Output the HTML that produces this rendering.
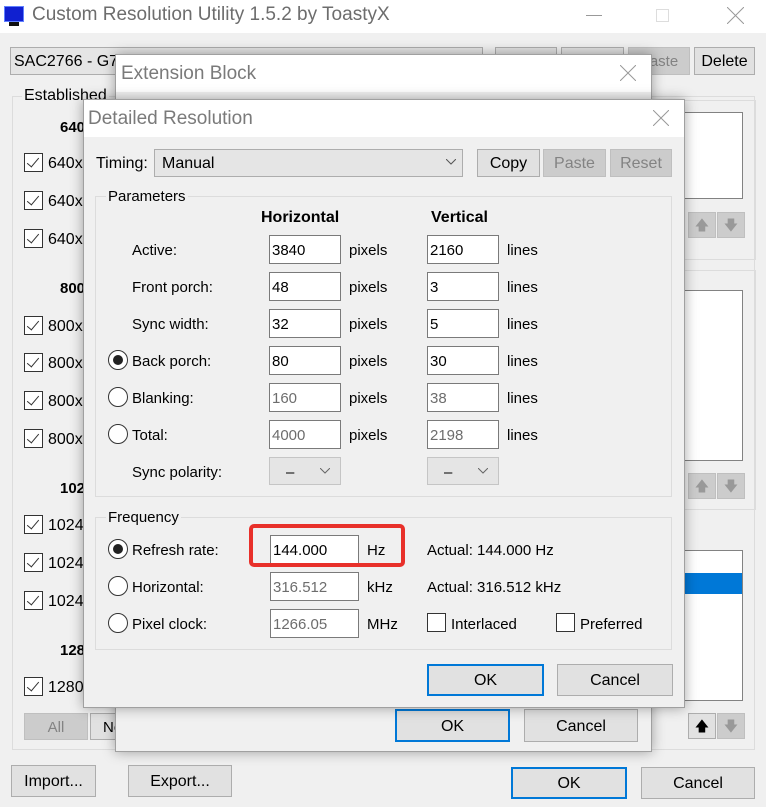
<!DOCTYPE html>
<html><head><meta charset="utf-8">
<style>
*{margin:0;padding:0;box-sizing:border-box}
body{width:766px;height:807px;background:#f0f0f0;position:relative;overflow:hidden;font-family:"Liberation Sans",sans-serif;font-size:15px;color:#000}
.a{position:absolute}
.t{position:absolute;white-space:nowrap;line-height:20px;margin-top:2px}
.btn{position:absolute;background:#e1e1e1;border:1px solid #adadad;text-align:center;font-size:15px;white-space:nowrap;overflow:hidden;padding-top:2px}
.dis{background:#cccccc;border-color:#bfbfbf;color:#838383}
.def{border:2px solid #0078d7}
.inp{position:absolute;background:#fff;border:1px solid #7a7a7a;height:29px;line-height:27px;padding-left:2px;padding-top:1px;font-size:15px}
.g{color:#6d6d6d}
.grp{position:absolute;border:1px solid #dcdcdc}
.cb{position:absolute;width:19px;height:19px;border:1px solid #333;background:#fff}
.cb.k::after{content:"";position:absolute;left:5px;top:1px;width:5px;height:11px;border:solid #333;border-width:0 1.5px 1.5px 0;transform:rotate(40deg)}
.rd{position:absolute;width:20px;height:20px;border:1px solid #333;border-radius:50%;background:#fff}
.rd.on::after{content:"";position:absolute;left:4px;top:4px;width:10px;height:10px;border-radius:50%;background:#222}
.win{position:absolute;background:#f0f0f0;border:1px solid #a0a0a0;box-shadow:0 0 12px rgba(0,0,0,.35)}
.tb{position:absolute;left:0;right:0;top:0;background:#fff}
.x{position:absolute}
.arr{position:absolute;width:28px;height:26px;background:#cccccc;border:1px solid #bfbfbf;color:#999;text-align:center;line-height:24px;font-size:14px}
.b{font-weight:bold}
</style></head><body>
<!-- main title -->
<div class="a" style="left:0;top:0;width:766px;height:33px;background:#fff"></div>
<div class="a" style="left:4px;top:6px;width:20px;height:16px;background:#1020d0;border:1px solid #6080ff"></div>
<div class="a" style="left:9px;top:22px;width:10px;height:4px;background:#111"></div>
<div class="t" style="left:32px;top:3px;font-size:19px;color:#6d6d6d">Custom Resolution Utility 1.5.2 by ToastyX</div>
<div class="a" style="left:586px;top:15px;width:16px;height:1px;background:#999"></div>
<div class="a" style="left:656px;top:9px;width:13px;height:13px;border:1px solid #ddd"></div>
<svg class="x" style="left:727px;top:7px" width="17" height="17"><path d="M0 0L17 17M17 0L0 17" stroke="#999" stroke-width="1"/></svg>

<div class="a" style="left:10px;top:47px;width:473px;height:28px;background:#e5e5e5;border:1px solid #adadad"></div>
<div class="t" style="left:14px;top:50px;font-size:16px">SAC2766 - G7</div>
<div class="btn" style="left:495px;top:47px;width:62px;height:28px"></div>
<div class="btn" style="left:561px;top:47px;width:63px;height:28px"></div>
<div class="btn dis" style="left:628px;top:47px;width:62px;height:28px;line-height:24px">Paste</div>
<div class="btn" style="left:694px;top:47px;width:61px;height:28px;line-height:24px;font-size:16px">Delete</div>

<div class="grp" style="left:12px;top:96px;width:743px;height:654px"></div>
<div class="t" style="left:22px;top:84px;background:#f0f0f0;padding:0 2px;font-size:16px">Established</div>

<div class="t b" style="left:60px;top:116px">640</div>
<div class="cb k" style="left:24px;top:153px"></div><div class="t" style="left:48px;top:152px;font-size:16px">640x</div>
<div class="cb k" style="left:24px;top:191px"></div><div class="t" style="left:48px;top:190px;font-size:16px">640x</div>
<div class="cb k" style="left:24px;top:229px"></div><div class="t" style="left:48px;top:228px;font-size:16px">640x</div>
<div class="t b" style="left:60px;top:277px">800</div>
<div class="cb k" style="left:24px;top:316px"></div><div class="t" style="left:48px;top:315px;font-size:16px">800x</div>
<div class="cb k" style="left:24px;top:353px"></div><div class="t" style="left:48px;top:352px;font-size:16px">800x</div>
<div class="cb k" style="left:24px;top:391px"></div><div class="t" style="left:48px;top:390px;font-size:16px">800x</div>
<div class="cb k" style="left:24px;top:429px"></div><div class="t" style="left:48px;top:428px;font-size:16px">800x</div>
<div class="t b" style="left:60px;top:477px">102</div>
<div class="cb k" style="left:24px;top:515px"></div><div class="t" style="left:48px;top:514px;font-size:16px">1024</div>
<div class="cb k" style="left:24px;top:553px"></div><div class="t" style="left:48px;top:552px;font-size:16px">1024</div>
<div class="cb k" style="left:24px;top:591px"></div><div class="t" style="left:48px;top:590px;font-size:16px">1024</div>
<div class="t b" style="left:60px;top:639px">128</div>
<div class="cb k" style="left:24px;top:677px"></div><div class="t" style="left:48px;top:676px;font-size:16px">1280</div>
<div class="btn dis" style="left:24px;top:713px;width:64px;height:27px;line-height:23px">All</div>
<div class="btn" style="left:90px;top:713px;width:40px;height:27px;line-height:23px;text-align:left;padding-left:12px">No</div>

<!-- right panels -->
<div class="grp" style="left:650px;top:100px;width:106px;height:160px"></div>
<div class="a" style="left:650px;top:112px;width:93px;height:87px;background:#fff;border:1px solid #828282"></div>
<div class="arr" style="left:688px;top:212px">🡅</div><div class="arr" style="left:717px;top:212px">🡇</div>
<div class="grp" style="left:650px;top:270px;width:106px;height:240px"></div>
<div class="a" style="left:650px;top:290px;width:93px;height:171px;background:#fff;border:1px solid #828282"></div>
<div class="arr" style="left:688px;top:473px">🡅</div><div class="arr" style="left:717px;top:473px">🡇</div>
<div class="a" style="left:650px;top:550px;width:93px;height:151px;background:#fff;border:1px solid #828282"></div>
<div class="a" style="left:651px;top:573px;width:91px;height:21px;background:#0078d7"></div>
<div class="arr" style="left:688px;top:713px;background:#e1e1e1;border-color:#adadad;color:#000">🡅</div><div class="arr" style="left:717px;top:713px">🡇</div>

<div class="btn" style="left:11px;top:765px;width:85px;height:32px;line-height:28px;font-size:16px">Import...</div>
<div class="btn" style="left:128px;top:765px;width:104px;height:32px;line-height:28px;font-size:16px">Export...</div>
<div class="btn def" style="left:511px;top:767px;width:116px;height:32px;line-height:26px;font-size:16px">OK</div>
<div class="btn" style="left:641px;top:767px;width:114px;height:32px;line-height:28px;font-size:16px">Cancel</div>

<!-- Extension Block -->
<div class="win" style="left:115px;top:54px;width:537px;height:698px">
 <div class="tb" style="height:37px"></div>
 <div class="t" style="left:5px;top:7px;font-size:19px;color:#7a7a7a">Extension Block</div>
 <svg class="x" style="left:504px;top:10px" width="16" height="16"><path d="M0 0L16 16M16 0L0 16" stroke="#999" stroke-width="1"/></svg>
 <div class="btn def" style="left:279px;top:654px;width:115px;height:33px;line-height:27px;font-size:16px">OK</div>
 <div class="btn" style="left:408px;top:654px;width:114px;height:33px;line-height:29px;font-size:16px">Cancel</div>
</div>

<!-- Detailed Resolution -->
<div class="win" style="left:83px;top:99px;width:602px;height:609px">
 <div class="tb" style="height:37px"></div>
 <div class="t" style="left:4px;top:7px;font-size:19px;color:#7a7a7a">Detailed Resolution</div>
 <svg class="x" style="left:569px;top:10px" width="16" height="16"><path d="M0 0L16 16M16 0L0 16" stroke="#999" stroke-width="1"/></svg>
</div>
<div class="t" style="left:96px;top:152px;font-size:16px">Timing:</div>
<div class="a" style="left:154px;top:149px;width:309px;height:28px;background:#e5e5e5;border:1px solid #adadad"></div>
<div class="t" style="left:162px;top:152px;font-size:16px">Manual</div>
<svg class="a" style="left:446px;top:159px" width="10" height="6"><path d="M0 0L5 5L10 0" stroke="#555" fill="none"/></svg>
<div class="btn" style="left:477px;top:149px;width:63px;height:28px;line-height:24px;font-size:16px">Copy</div>
<div class="btn dis" style="left:543px;top:149px;width:63px;height:28px;line-height:24px;font-size:16px">Paste</div>
<div class="btn dis" style="left:610px;top:149px;width:62px;height:28px;line-height:24px;font-size:16px">Reset</div>

<div class="grp" style="left:95px;top:196px;width:577px;height:301px"></div>
<div class="t" style="left:106px;top:185px;background:#f0f0f0;padding:0 2px">Parameters</div>
<div class="t b" style="left:261px;top:206px;font-size:16px">Horizontal</div>
<div class="t b" style="left:431px;top:206px;font-size:16px">Vertical</div>

<div class="t" style="left:132px;top:239px">Active:</div>
<div class="inp" style="left:269px;top:235px;width:72px">3840</div><div class="t" style="left:349px;top:239px">pixels</div>
<div class="inp" style="left:427px;top:235px;width:72px">2160</div><div class="t" style="left:507px;top:239px">lines</div>

<div class="t" style="left:132px;top:276px">Front porch:</div>
<div class="inp" style="left:269px;top:272px;width:72px">48</div><div class="t" style="left:349px;top:276px">pixels</div>
<div class="inp" style="left:427px;top:272px;width:72px">3</div><div class="t" style="left:507px;top:276px">lines</div>

<div class="t" style="left:132px;top:313px">Sync width:</div>
<div class="inp" style="left:269px;top:309px;width:72px">32</div><div class="t" style="left:349px;top:313px">pixels</div>
<div class="inp" style="left:427px;top:309px;width:72px">5</div><div class="t" style="left:507px;top:313px">lines</div>

<div class="rd on" style="left:108px;top:350px"></div>
<div class="t" style="left:132px;top:350px">Back porch:</div>
<div class="inp" style="left:269px;top:346px;width:72px">80</div><div class="t" style="left:349px;top:350px">pixels</div>
<div class="inp" style="left:427px;top:346px;width:72px">30</div><div class="t" style="left:507px;top:350px">lines</div>

<div class="rd" style="left:108px;top:387px"></div>
<div class="t" style="left:132px;top:387px">Blanking:</div>
<div class="inp g" style="left:269px;top:383px;width:72px">160</div><div class="t" style="left:349px;top:387px">pixels</div>
<div class="inp g" style="left:427px;top:383px;width:72px">38</div><div class="t" style="left:507px;top:387px">lines</div>

<div class="rd" style="left:108px;top:424px"></div>
<div class="t" style="left:132px;top:424px">Total:</div>
<div class="inp g" style="left:269px;top:420px;width:72px">4000</div><div class="t" style="left:349px;top:424px">pixels</div>
<div class="inp g" style="left:427px;top:420px;width:72px">2198</div><div class="t" style="left:507px;top:424px">lines</div>

<div class="t" style="left:132px;top:461px">Sync polarity:</div>
<div class="a" style="left:269px;top:457px;width:72px;height:28px;background:#e5e5e5;border:1px solid #c5c5c5"></div>
<div class="t" style="left:286px;top:461px">–</div>
<svg class="a" style="left:320px;top:468px" width="10" height="6"><path d="M0 0L5 5L10 0" stroke="#666" fill="none"/></svg>
<div class="a" style="left:427px;top:457px;width:72px;height:28px;background:#e5e5e5;border:1px solid #c5c5c5"></div>
<div class="t" style="left:444px;top:461px">–</div>
<svg class="a" style="left:478px;top:468px" width="10" height="6"><path d="M0 0L5 5L10 0" stroke="#666" fill="none"/></svg>

<div class="grp" style="left:95px;top:517px;width:577px;height:133px"></div>
<div class="t" style="left:106px;top:506px;background:#f0f0f0;padding:0 2px">Frequency</div>

<div class="rd on" style="left:108px;top:539px"></div>
<div class="t" style="left:132px;top:539px">Refresh rate:</div>
<div class="inp" style="left:270px;top:535px;width:89px">144.000</div><div class="t" style="left:367px;top:539px">Hz</div>
<div class="t" style="left:427px;top:539px">Actual: 144.000 Hz</div>
<div class="a" style="left:249px;top:524px;width:156px;height:43px;border:4px solid #e8302a;border-radius:5px"></div>

<div class="rd" style="left:108px;top:576px"></div>
<div class="t" style="left:132px;top:576px">Horizontal:</div>
<div class="inp g" style="left:270px;top:572px;width:89px">316.512</div><div class="t" style="left:367px;top:576px">kHz</div>
<div class="t" style="left:427px;top:576px">Actual: 316.512 kHz</div>

<div class="rd" style="left:108px;top:613px"></div>
<div class="t" style="left:132px;top:613px">Pixel clock:</div>
<div class="inp g" style="left:270px;top:609px;width:89px">1266.05</div><div class="t" style="left:367px;top:613px">MHz</div>
<div class="cb" style="left:427px;top:613px"></div><div class="t" style="left:451px;top:613px">Interlaced</div>
<div class="cb" style="left:556px;top:613px"></div><div class="t" style="left:580px;top:613px">Preferred</div>

<div class="btn def" style="left:427px;top:664px;width:117px;height:32px;line-height:26px;font-size:16px">OK</div>
<div class="btn" style="left:557px;top:664px;width:116px;height:32px;line-height:28px;font-size:16px">Cancel</div>
</body></html>
